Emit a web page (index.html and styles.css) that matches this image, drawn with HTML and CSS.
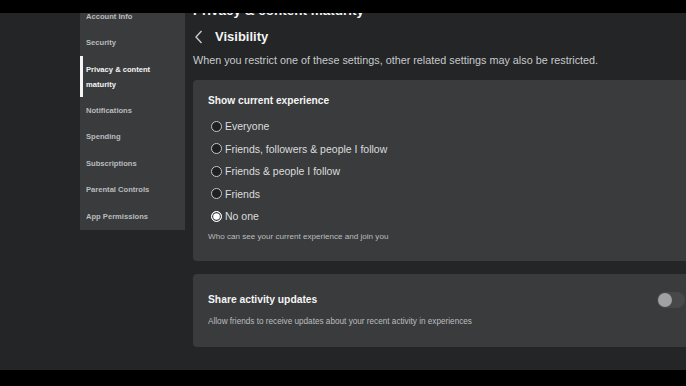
FILE: index.html
```html
<!DOCTYPE html>
<html lang="en">
<head>
<meta charset="utf-8">
<title>Visibility</title>
<link rel="stylesheet" href="styles.css">
</head>
<body>
<div class="page">
  <nav class="sidebar">
    <a class="nav-item">Account Info</a>
    <a class="nav-item">Security</a>
    <a class="nav-item active">Privacy &amp; content maturity</a>
    <a class="nav-item">Notifications</a>
    <a class="nav-item">Spending</a>
    <a class="nav-item">Subscriptions</a>
    <a class="nav-item">Parental Controls</a>
    <a class="nav-item">App Permissions</a>
  </nav>
  <main class="main">
    <h1 class="page-title">Privacy &amp; content maturity</h1>
    <div class="sub-header">
      <svg class="back" width="10" height="14" viewBox="0 0 10 14"><polyline points="7.5,1 2,7 7.5,13" fill="none" stroke="#c9cacb" stroke-width="1.4"/></svg>
      <h2 class="sub-title">Visibility</h2>
    </div>
    <p class="intro">When you restrict one of these settings, other related settings may also be restricted.</p>

    <section class="card card-exp">
      <h3 class="card-title">Show current experience</h3>
      <ul class="radio-list">
        <li class="radio-row"><span class="radio"></span>Everyone</li>
        <li class="radio-row"><span class="radio"></span>Friends, followers &amp; people I follow</li>
        <li class="radio-row"><span class="radio"></span>Friends &amp; people I follow</li>
        <li class="radio-row"><span class="radio"></span>Friends</li>
        <li class="radio-row"><span class="radio checked"></span>No one</li>
      </ul>
      <p class="hint">Who can see your current experience and join you</p>
    </section>

    <section class="card card-share">
      <div class="card-row">
        <h3 class="card-title">Share activity updates</h3>
        <span class="toggle"><span class="knob"></span></span>
      </div>
      <p class="hint hint-share">Allow friends to receive updates about your recent activity in experiences</p>
    </section>
  </main>
</div>
<div class="letterbox letterbox-top"></div>
<div class="letterbox letterbox-bottom"></div>
</body>
</html>
```
FILE: styles.css
```css
html, body {
  margin: 0;
  padding: 0;
  background: #232527;
  overflow: hidden;
  width: 686px;
  height: 386px;
}
body {
  font-family: "Liberation Sans", Arial, sans-serif;
  color: #f2f2f2;
}
.page {
  display: flex;
  align-items: flex-start;
  gap: 8px;
  padding-left: 80px;
}
.sidebar {
  width: 105px;
  flex: none;
  background: #393b3d;
  padding-top: 3px;
  display: flex;
  flex-direction: column;
}
.nav-item {
  display: block;
  padding: 5.75px 6px 5.75px 3px;
  font-size: 7.6px;
  font-weight: 700;
  line-height: 15px;
  color: #b9bbbd;
  border-left: 3px solid transparent;
}
.nav-item.active {
  color: #f4f4f4;
  border-left-color: #f4f4f4;
  padding-top: 5.5px;
  padding-bottom: 5.5px;
  padding-right: 14px;
}
.main {
  width: 507px;
  flex: none;
}
.page-title {
  margin: 0;
  font-size: 13.5px;
  line-height: 21px;
  font-weight: 700;
  color: #f4f4f4;
}
.sub-header {
  display: flex;
  align-items: center;
  margin-top: 6px;
  height: 20px;
}
.back {
  margin-left: 1px;
  margin-right: 11px;
}
.sub-title {
  margin: 0;
  font-size: 13px;
  font-weight: 700;
  line-height: 20px;
  color: #f4f4f4;
}
.intro {
  margin: 6px 0 0;
  font-size: 10.8px;
  line-height: 14px;
  color: #c9cacb;
}
.card {
  background: #393b3d;
  border-radius: 4px;
  padding: 0 15px;
}
.card-exp {
  margin-top: 13px;
  padding-top: 14px;
  padding-bottom: 18px;
}
.card-share {
  margin-top: 13px;
  padding-top: 18px;
  padding-bottom: 19px;
}
.card-title {
  margin: 0;
  font-size: 10.2px;
  line-height: 14px;
  font-weight: 700;
  color: #f4f4f4;
}
.card-share .card-title {
  font-size: 10.3px;
}
.radio-list {
  list-style: none;
  margin: 6.75px 0 0;
  padding: 0;
}
.radio-row {
  display: flex;
  align-items: center;
  height: 22.5px;
  font-size: 10.5px;
  color: #dcdddd;
  padding-left: 2.5px;
}
.radio {
  width: 11px;
  height: 11px;
  box-sizing: border-box;
  border-radius: 50%;
  border: 1px solid #c4c5c6;
  background: #1e2022;
  margin-right: 3.5px;
  flex: none;
}
.radio.checked {
  background: #ffffff;
  border: 1px solid #ffffff;
  box-shadow: inset 0 0 0 1.2px #393b3d;
}
.hint {
  margin: 3.75px 0 0;
  font-size: 8.1px;
  line-height: 12px;
  color: #bcbdbe;
}
.card-row {
  display: flex;
  align-items: center;
  justify-content: space-between;
  height: 16px;
}
.hint-share {
  margin-top: 8px;
  font-size: 8.2px;
}
.toggle {
  width: 28px;
  height: 16px;
  border-radius: 8px;
  background: #46484a;
  display: flex;
  align-items: center;
  padding-left: 1px;
  box-sizing: border-box;
}
.knob {
  width: 14px;
  height: 14px;
  border-radius: 50%;
  background: #a0a1a2;
}
.letterbox {
  position: fixed;
  left: 0;
  width: 686px;
  background: #000;
}
.letterbox-top {
  top: 0;
  height: 13px;
}
.letterbox-bottom {
  top: 370px;
  height: 16px;
}
```
